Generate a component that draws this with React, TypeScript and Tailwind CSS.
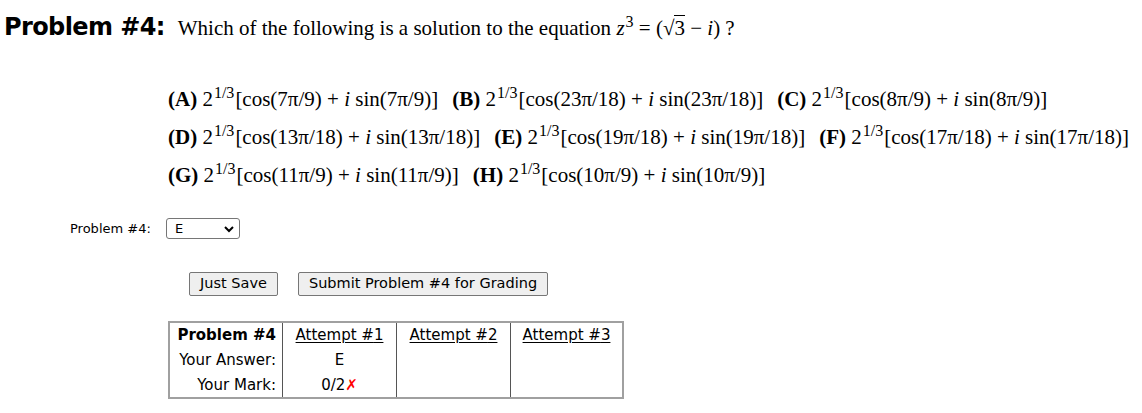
const serif = { fontFamily: '"Liberation Serif", "Times New Roman", serif' };

// 2^{1/3}[cos(a) + i sin(a)]
function Root({ arg }: { arg: string }) {
  return (
    <span>
      2<sup className="relative -top-[8px] ml-[1px] mr-[1px] align-baseline text-[16px]">1/3</sup>
      [cos({arg}) + <i>i</i> sin({arg})]
    </span>
  );
}

function Opt({ label, arg }: { label: string; arg: string }) {
  return (
    <span className="whitespace-nowrap">
      <b>({label})</b> <Root arg={arg} />
    </span>
  );
}

export default function App() {
  const verdana = "font-['DejaVu_Sans',Verdana,sans-serif]";
  return (
    <div className="h-[413px] w-[1142px] overflow-hidden bg-white text-black">
      {/* heading */}
      <div className="flex items-baseline pl-[4px] pt-[9px]">
        <span className={`${verdana} text-[24px] font-bold tracking-[-0.6px]`}>Problem #4:</span>
        <span className="ml-[13px] text-[21px]" style={serif}>
          Which of the following is a solution to the equation <i>z</i>
          <sup className="relative -top-[8px] ml-[1px] align-baseline text-[16px]">3</sup> = (√
          <span className="border-t border-black">3</span> − <i>i</i>) ?
        </span>
      </div>

      {/* options */}
      <div className="mt-[42px] flex flex-col gap-[13px] pl-[168px] text-[21px] leading-[25px]" style={serif}>
        <div className="flex gap-[14px] whitespace-nowrap">
          <Opt label="A" arg="7π/9" />
          <Opt label="B" arg="23π/18" />
          <Opt label="C" arg="8π/9" />
        </div>
        <div className="flex gap-[14px] whitespace-nowrap">
          <Opt label="D" arg="13π/18" />
          <Opt label="E" arg="19π/18" />
          <Opt label="F" arg="17π/18" />
        </div>
        <div className="flex gap-[14px] whitespace-nowrap">
          <Opt label="G" arg="11π/9" />
          <Opt label="H" arg="10π/9" />
        </div>
      </div>

      {/* answer select */}
      <div className={`${verdana} mt-[30px] flex items-center pl-[70px] text-[13px]`}>
        <span className="w-[96px]">Problem #4:</span>
        <div className="flex h-[21px] w-[74px] items-center justify-between rounded-[3px] border border-[#767676] pl-[8px] pr-[4px]">
          <span>E</span>
          <svg width="12" height="12" viewBox="0 0 12 12">
            <path d="M2 4 L6 8 L10 4" fill="none" stroke="black" strokeWidth="2" />
          </svg>
        </div>
      </div>

      {/* buttons */}
      <div className={`${verdana} mt-[33px] flex gap-[20px] pl-[189px] text-[14.5px]`}>
        <button className="h-[24px] rounded-[2px] border border-[#767676] bg-[#efefef] px-[10px]">Just Save</button>
        <button className="h-[24px] rounded-[2px] border border-[#767676] bg-[#efefef] px-[10px]">
          Submit Problem #4 for Grading
        </button>
      </div>

      {/* attempts table */}
      <div className={`${verdana} ml-[168px] mt-[25px] w-[456px] border-2 border-[#a0a0a0] text-[15px]`}>
        <div className="grid grid-cols-[113px_114px_114px_111px]">
          <div className="flex flex-col border-r border-[#555]">
            <div className="h-[25px] pr-[6px] pt-[1px] text-right font-bold">Problem #4</div>
            <div className="h-[25px] pr-[6px] pt-[1px] text-right">Your Answer:</div>
            <div className="h-[24px] pr-[6px] pt-[1px] text-right">Your Mark:</div>
          </div>
          {["1", "2", "3"].map((n, i) => (
            <div key={n} className={`flex flex-col ${i < 2 ? "border-r border-[#555]" : ""}`}>
              <div className="h-[25px] pt-[1px] text-center underline underline-offset-2">Attempt #{n}</div>
              <div className="h-[25px] pt-[1px] text-center">{i === 0 ? "E" : ""}</div>
              <div className="h-[24px] pt-[1px] text-center">
                {i === 0 ? (
                  <>
                    0/2<span className="font-bold text-[#ff0000]">✗</span>
                  </>
                ) : null}
              </div>
            </div>
          ))}
        </div>
      </div>
    </div>
  );
}
